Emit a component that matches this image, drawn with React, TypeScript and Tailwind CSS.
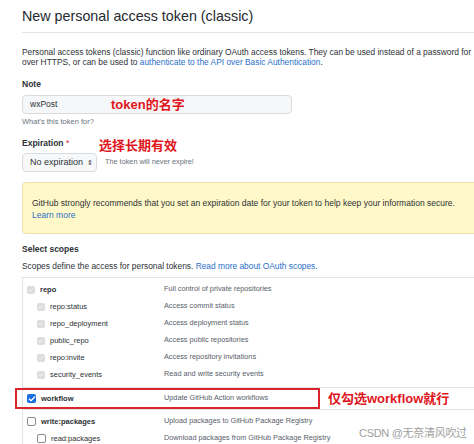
import { Check } from "lucide-react";

type Scope = {
  name: string;
  desc: string;
  sub?: boolean;
  state: "disabled" | "checked" | "empty";
};

const groups: Scope[][] = [
  [
    { name: "repo", desc: "Full control of private repositories", state: "disabled" },
    { name: "repo:status", desc: "Access commit status", sub: true, state: "disabled" },
    { name: "repo_deployment", desc: "Access deployment status", sub: true, state: "disabled" },
    { name: "public_repo", desc: "Access public repositories", sub: true, state: "disabled" },
    { name: "repo:invite", desc: "Access repository invitations", sub: true, state: "disabled" },
    { name: "security_events", desc: "Read and write security events", sub: true, state: "disabled" },
  ],
  [{ name: "workflow", desc: "Update GitHub Action workflows", state: "checked" }],
  [
    { name: "write:packages", desc: "Upload packages to GitHub Package Registry", state: "empty" },
    { name: "read:packages", desc: "Download packages from GitHub Package Registry", sub: true, state: "empty" },
  ],
];

function Box({ state }: { state: Scope["state"] }) {
  if (state === "checked") {
    return (
      <span className="w-[9px] h-[9px] rounded-[2px] bg-[#1a6fe0] flex items-center justify-center">
        <Check className="w-[8px] h-[8px] text-white" strokeWidth={4} />
      </span>
    );
  }
  if (state === "disabled") {
    return (
      <span className="w-[8px] h-[8px] rounded-[2px] bg-[#dcdcdc] flex items-center justify-center">
        <Check className="w-[6px] h-[6px] text-[#f4f4f4]" strokeWidth={4} />
      </span>
    );
  }
  return <span className="w-[9px] h-[9px] rounded-[2px] border border-[#8a8a8a] bg-white" />;
}

function ScopeRow({ s }: { s: Scope }) {
  return (
    <div className="flex items-center h-[17px]">
      <div className={`flex items-center w-[141px] shrink-0 ${s.sub ? "pl-[14px]" : "pl-[4px]"}`}>
        <Box state={s.state} />
        <span
          className={`${s.sub ? "ml-[5px]" : "ml-[5px] font-bold"} text-[7.5px] text-[#2d3136]`}
        >
          {s.name}
        </span>
      </div>
      <span className="text-[7.3px] text-[#57606a] whitespace-nowrap">{s.desc}</span>
    </div>
  );
}

export default function App() {
  return (
    <div
      className="w-[474px] h-[444px] overflow-hidden bg-white relative"
      style={{ fontFamily: '"Liberation Sans", "Noto Sans CJK SC", sans-serif' }}
    >
      <div className="pl-[22px] w-[470px]">
        <div className="pt-[6px] pb-[6px] border-b border-[#e1e4e8] w-[460px]">
          <h1 className="text-[14.3px] leading-[20px] text-[#24292f]">
            New personal access token (classic)
          </h1>
        </div>

        <div className="mt-[14px] text-[8.4px] leading-[10px] text-[#2d3136] whitespace-nowrap">
          <div>
            Personal access tokens (classic) function like ordinary OAuth access tokens. They can
            be used instead of a password for
          </div>
          <div>
            over HTTPS, or can be used to{" "}
            <span className="text-[#2a6fc9]">authenticate to the API over Basic Authentication</span>.
          </div>
        </div>

        <div className="mt-[12px] text-[8.5px] leading-[11px] font-bold text-[#2d3136]">Note</div>
        <div className="relative mt-[5px] w-[270px] h-[19px] rounded-[4px] border border-[#d8dcdf] bg-[#f5f7f9] flex items-center pl-[7px]">
          <span className="text-[8.5px] text-[#2d3136]">wxPost</span>
          <span className="absolute left-[88px] top-[1px] text-[13px] leading-[16px] font-bold text-[#e0151c]">
            token的名字
          </span>
        </div>
        <div className="mt-[3px] text-[7.5px] leading-[10px] text-[#6a737d]">
          What's this token for?
        </div>

        <div className="relative mt-[11px] text-[8.5px] leading-[11px] font-bold text-[#2d3136]">
          Expiration <span className="text-[#d1242f] font-normal">*</span>
          <span className="absolute left-[77px] top-[0px] text-[13px] leading-[16px] font-bold text-[#e0151c]">
            选择长期有效
          </span>
        </div>
        <div className="mt-[4px] flex items-center">
          <div className="w-[75px] h-[19px] rounded-[4px] border border-[#d8dcdf] bg-[#f7f8fa] flex items-center pl-[7px] gap-[4px]">
            <span className="text-[9px] text-[#2d3136]">No expiration</span>
            <span className="text-[7px] text-[#2d3136] leading-none">⇕</span>
          </div>
          <span className="ml-[8px] text-[7.3px] text-[#6a737d]">The token will never expire!</span>
        </div>

        <div className="mt-[10px] w-[460px] h-[52px] rounded-[4px] border border-[#ece0a2] bg-[#fff8c8] pl-[9px] pt-[14px] text-[8.5px] leading-[12px] text-[#2d3136] whitespace-nowrap">
          <div>
            GitHub strongly recommends that you set an expiration date for your token to help keep
            your information secure.
          </div>
          <div className="text-[#2a6fc9]">Learn more</div>
        </div>

        <div className="mt-[10px] text-[8.5px] leading-[11px] font-bold text-[#2d3136]">
          Select scopes
        </div>
        <div className="mt-[6px] text-[8.4px] leading-[11px] text-[#2d3136] whitespace-nowrap">
          Scopes define the access for personal tokens.{" "}
          <span className="text-[#2a6fc9]">Read more about OAuth scopes.</span>
        </div>

        <div className="mt-[5px] w-[460px] border-t border-l border-[#e1e4e8]">
          <div className="border-b border-[#e1e4e8] pt-[3px] pb-[4px]">
            {groups[0].map((s) => (
              <ScopeRow key={s.name} s={s} />
            ))}
          </div>
          <div className="relative border-b border-[#e1e4e8] pt-[2px] pb-[2px]">
            <ScopeRow s={groups[1][0]} />
            <div className="absolute left-[-8px] top-[0px] w-[305px] h-[21px] border-2 border-[#d8262c]" />
            <span className="absolute left-[305px] top-[2px] text-[13px] leading-[17px] font-bold text-[#e0151c] whitespace-nowrap">
              仅勾选workflow就行
            </span>
          </div>
          <div className="pt-[3px]">
            {groups[2].map((s) => (
              <ScopeRow key={s.name} s={s} />
            ))}
          </div>
        </div>
      </div>

      <span className="absolute left-[359px] top-[425px] text-[11px] leading-[16px] tracking-[-0.3px] text-[#a0a0a0] whitespace-nowrap">
        CSDN @无奈清风吹过
      </span>
    </div>
  );
}
